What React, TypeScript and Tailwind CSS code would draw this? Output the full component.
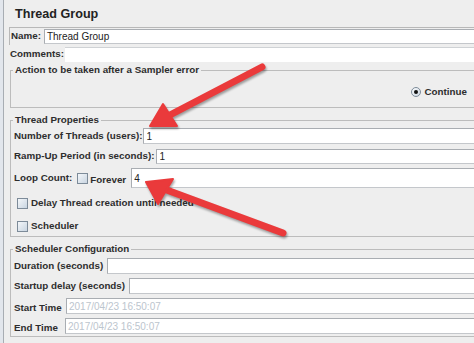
import React from 'react';

const FONT = { fontFamily: '"Liberation Sans", Arial, sans-serif' };

const Field = ({ value = '', muted = false, h = 'h-[16px]' }: { value?: string; muted?: boolean; h?: string }) => (
  <div
    className={`flex-1 min-w-0 ${h} bg-white border border-[#a9adb2] border-b-[#c4c7cb] flex items-center pl-[2px] text-[10px] ${
      muted ? 'text-[#bcc5ce]' : 'text-[#222]'
    }`}
  >
    {value}
  </div>
);

const Check = ({ className = '' }: { className?: string }) => (
  <span
    className={`inline-block w-[11px] h-[11px] shrink-0 border border-[#7d8b99] bg-gradient-to-br from-[#f4f7fa] to-[#c9d5e1] ${className}`}
  />
);

const Label = ({ children }: { children: React.ReactNode }) => (
  <span className="shrink-0 text-[9.8px] font-bold text-[#2d2d2d] whitespace-nowrap">{children}</span>
);

const Frame = ({ title, className = '', children }: { title: string; className?: string; children: React.ReactNode }) => (
  <fieldset className={`ml-[1px] border border-[#bcbcbc] pl-[2px] ${className}`}>
    <legend className="px-[2px] text-[9.8px] leading-[12px] font-bold text-[#2d2d2d]">{title}</legend>
    {children}
  </fieldset>
);

const Arrows = () => (
  <svg
    className="absolute inset-0 pointer-events-none drop-shadow-[1px_2px_1px_rgba(0,0,0,0.35)]"
    width="474"
    height="343"
    viewBox="0 0 474 343"
  >
    <g fill="#ea3a3b" stroke="#ea3a3b" strokeLinejoin="round">
      <line x1="262" y1="67" x2="168" y2="116" strokeWidth="7" strokeLinecap="round" />
      <polygon points="150,126 163,104 177,126" strokeWidth="2" />
      <line x1="283" y1="233" x2="164" y2="189" strokeWidth="7" strokeLinecap="round" />
      <polygon points="146,182 173,179 158,204" strokeWidth="2" />
    </g>
  </svg>
);

export default function App() {
  return (
    <div className="relative w-[474px] h-[343px] overflow-hidden bg-[#eeeeee] flex" style={FONT}>
      <div className="w-[4px] shrink-0 bg-[#e2e6ec] border-r border-[#a8adb3]" />
      <div className="w-[480px] shrink-0 pl-[5px]">
        <div className="h-[27px] ml-[6px] pt-[1px] flex items-center text-[12.6px] font-bold text-[#222]">Thread Group</div>

        <div className="h-[18px] border-t border-l border-[#b8b8b8] flex items-center gap-[3px] pl-[1px]">
          <Label>Name:</Label>
          <Field value="Thread Group" h="h-[15px]" />
        </div>

        <div className="h-[18px] flex items-center gap-[1px] pl-[1px]">
          <Label>Comments:</Label>
          <div className="flex-1 h-[15px] bg-white border-t border-[#cfd2d5]" />
        </div>

        <Frame title="Action to be taken after a Sampler error" className="mt-[1px]">
          <div className="h-[31px] pt-[1px] flex items-center justify-end pr-[16px] gap-[4px]">
            <span className="w-[10px] h-[10px] rounded-full border border-[#7d8b99] bg-gradient-to-br from-[#fafcfe] to-[#cdd7e1] flex items-center justify-center">
              <span className="w-[4px] h-[4px] rounded-full bg-[#111]" />
            </span>
            <Label>Continue</Label>
          </div>
        </Frame>

        <Frame title="Thread Properties" className="mt-[6px] pb-[3px]">
          <div className="pl-[1px] flex flex-col">
            <div className="mt-[2px] h-[16px] flex items-center gap-[1px]">
              <Label>Number of Threads (users):</Label>
              <Field value="1" />
            </div>
            <div className="mt-[4px] h-[16px] flex items-center gap-[2px]">
              <Label>Ramp-Up Period (in seconds):</Label>
              <Field value="1" h="h-[15px]" />
            </div>
            <div className="mt-[4px] h-[20px] flex items-center">
              <Label>Loop Count:</Label>
              <Check className="ml-[5px]" />
              <span className="ml-[2px]">
                <Label>Forever</Label>
              </span>
              <div className="ml-[5px] flex-1 flex">
                <Field value="4" h="h-[20px]" />
              </div>
            </div>
            <div className="mt-[8px] h-[14px] flex items-center gap-[3px] pl-[3px]">
              <Check />
              <Label>Delay Thread creation until needed</Label>
            </div>
            <div className="mt-[9px] h-[14px] flex items-center gap-[3px] pl-[3px]">
              <Check />
              <Label>Scheduler</Label>
            </div>
          </div>
        </Frame>

        <Frame title="Scheduler Configuration" className="mt-[6px] pb-[2px]">
          <div className="pl-[1px] flex flex-col">
            <div className="mt-[3px] h-[16px] flex items-center gap-[4px]">
              <Label>Duration (seconds)</Label>
              <Field />
            </div>
            <div className="mt-[4px] h-[16px] flex items-center gap-[4px]">
              <Label>Startup delay (seconds)</Label>
              <Field />
            </div>
            <div className="mt-[4px] h-[16px] flex items-center">
              <span className="w-[52px] shrink-0">
                <Label>Start Time</Label>
              </span>
              <Field value="2017/04/23 16:50:07" muted />
            </div>
            <div className="mt-[4px] h-[16px] flex items-center">
              <span className="w-[51px] shrink-0">
                <Label>End Time</Label>
              </span>
              <Field value="2017/04/23 16:50:07" muted />
            </div>
          </div>
        </Frame>
      </div>
      <Arrows />
    </div>
  );
}
